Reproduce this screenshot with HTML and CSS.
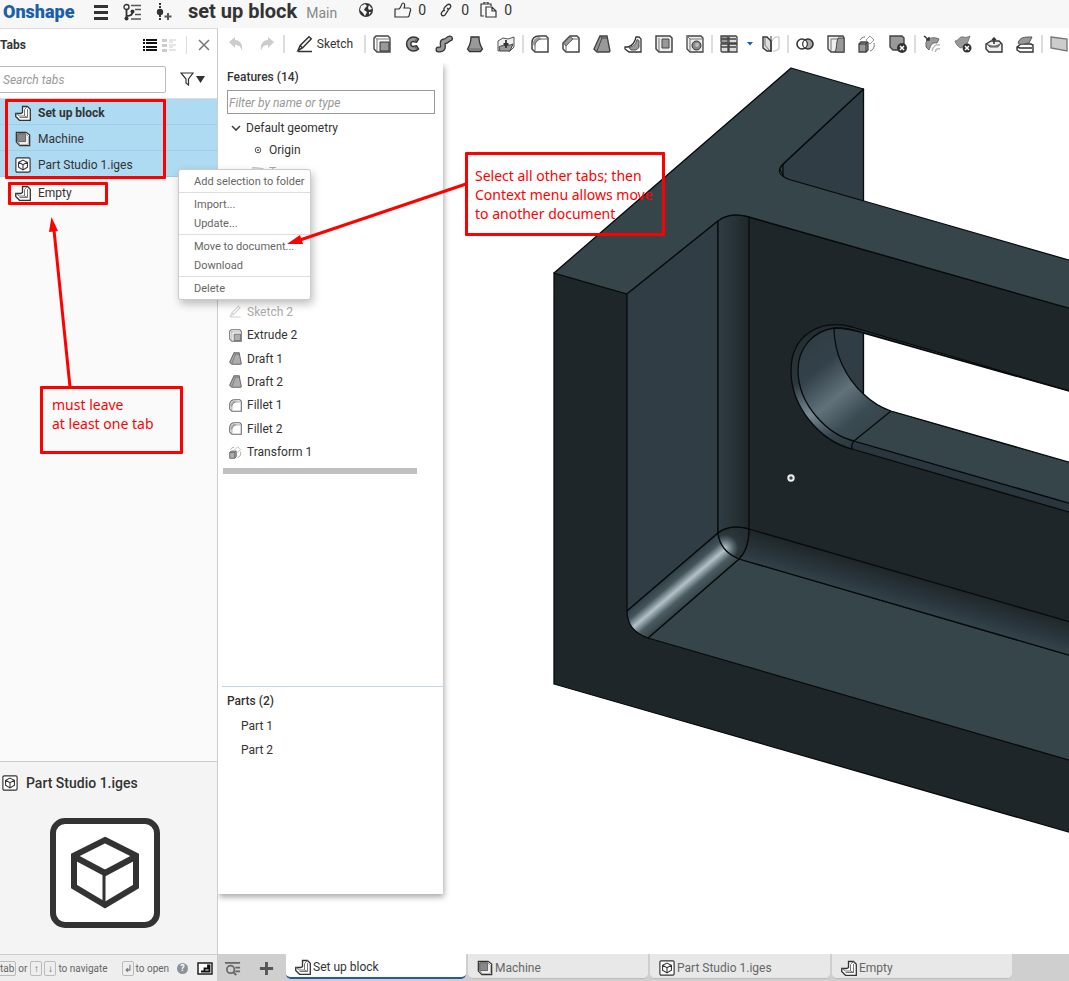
FILE: index.html
```html
<!DOCTYPE html>
<html lang="en">
<head>
    <meta charset="UTF-8">
    <title>set up block | Main</title>
    <link rel="stylesheet" href="styles.css">
</head>
<body>
    <!-- icon sprites -->
    <svg class="sprites" aria-hidden="true">
        <symbol id="i-studio" viewBox="0 0 16 16"><path d="M7.500 1.500h5l2.800 2.800v11H4.500L.7 11.500v-3h5l1.800-1z" fill="#fff" stroke="#333" stroke-width="1.300"/><path d="M.7 8.500l3.800 2.500h5V4.500l3-3M9.500 11l3 1.500h-8M12.500 4v8.500" fill="none" stroke="#777"/></symbol>
        <symbol id="i-machine" viewBox="0 0 18 18"><path d="M1.500 1.500h11l4 3v12h-11l-4-4z" fill="#fff" stroke="#333" stroke-width="1.400"/><path d="M3 3h9v9H3z" fill="#888" stroke="#555"/><path d="M12 3l3 3v9H6l-3-3" fill="none" stroke="#999"/></symbol>
        <symbol id="i-cube" viewBox="0 0 18 18"><rect x="1" y="1" width="16" height="16" rx="1.500" fill="#fff" stroke="#333" stroke-width="1.300"/><path d="M9 3.500l5 2.500v5.500l-5 3-5-3V6zM4 6l5 2.700L14 6M9 8.700v5.500" fill="none" stroke="#333" stroke-width="1.200"/></symbol>
        <symbol id="i-sketch" viewBox="0 0 18 18"><path d="M2 15.500l2.200-5L13 1.700l2.300 2L6.500 13zM4.200 10.500L6.500 13M2 16.500h14" fill="none" stroke="currentColor" stroke-width="1.500"/></symbol>
        <symbol id="i-extrude" viewBox="0 0 18 18"><path d="M1 3l2-2h12l2 2v14H4l-3-3z" fill="#fff" stroke="#444" stroke-width="1.400"/><path d="M4 4h12M4 4v12M1.500 2L4 4" stroke="#777" fill="none"/><path d="M7 7h9v9H7z" fill="#999" stroke="#333"/></symbol>
        <symbol id="i-revolve" viewBox="0 0 18 18"><path d="M14.500 4A7 7 0 1 0 14.500 14l-2-3.200-2.300.4a2.400 2.400 0 1 1 0-4.400l2.300.4z" fill="#999" stroke="#333" stroke-width="1.500"/><path d="M10 7l2.500-3M10 11l2.500 3" stroke="#555"/></symbol>
        <symbol id="i-sweep" viewBox="0 0 18 18"><path d="M3.500 14.500C12 15 5 7 9 6.500S12 4 15 3.500" fill="none" stroke="#333" stroke-width="6" stroke-linecap="round"/><path d="M3.500 14.500C12 15 5 7 9 6.500S12 4 15 3.500" fill="none" stroke="#999" stroke-width="3.500" stroke-linecap="round"/></symbol>
        <symbol id="i-loft" viewBox="0 0 18 18"><path d="M5 2h8c0 6 1.500 9 3.500 12l-2 2.500h-11l-2-2.500C3.500 11 5 8 5 2z" fill="#999" stroke="#333" stroke-width="1.300"/><path d="M3 14h12" stroke="#666"/></symbol>
        <symbol id="i-thicken" viewBox="0 0 18 18"><path d="M1 6l5-3 5 1 6-2v10l-4 4-5-1-7 1z" fill="#eee" stroke="#555"/><path d="M2 12c4-3 8 0 14-3l-3 7H3z" fill="#999" stroke="#444"/><path d="M9 5v8M6.500 9h5" stroke="#333" stroke-width="1.800" fill="none"/></symbol>
        <symbol id="i-fillet" viewBox="0 0 18 18"><path d="M1 8c0-4 2-7 7-7h7l2 2v14H4l-3-3z" fill="#fff" stroke="#444" stroke-width="1.500"/><path d="M1.500 9c1-4 3-7 7-7l2 2C6 5 5 7 4 11z" fill="#999"/><path d="M4 16v-5c0-4 3-7 7-7h5" fill="none" stroke="#666"/></symbol>
        <symbol id="i-chamfer" viewBox="0 0 18 18"><path d="M1 8l7-7h7l2 2v14H4l-3-3z" fill="#fff" stroke="#444" stroke-width="1.500"/><path d="M1.500 8L8 1.500 11 4l-7 7z" fill="#999" stroke="#555"/><path d="M4 16v-5l7-7h5" fill="none" stroke="#666"/></symbol>
        <symbol id="i-draft" viewBox="0 0 18 18"><path d="M7 1h7l3 15-1 1H4l-3-3z" fill="#999" stroke="#444" stroke-width="1.400"/><path d="M7 1l2 2h6M9 3L4 16" fill="none" stroke="#444"/></symbol>
        <symbol id="i-rib" viewBox="0 0 18 18"><path d="M12 2h3l2 2v13H5l-4-3v-2h3c4-1 7-5 8-10z" fill="#fff" stroke="#333" stroke-width="1.300"/><path d="M5 12.500c5-1 7-4 8-8l2 1v7l-3 2.500H7z" fill="#999" stroke="#555"/></symbol>
        <symbol id="i-shell" viewBox="0 0 18 18"><path d="M1 1h14l2 2v14H4l-3-3z" fill="#eee" stroke="#444" stroke-width="1.500"/><path d="M4 3v13" stroke="#777"/><path d="M7 4h7v9H7z" fill="#999" stroke="#444"/></symbol>
        <symbol id="i-hole" viewBox="0 0 18 18"><path d="M1 1h14l2 2v14H4l-3-3z" fill="#eee" stroke="#444" stroke-width="1.300"/><path d="M1 1l3 3h12M4 4v12" stroke="#777" fill="none"/><circle cx="10.500" cy="10.500" r="4.500" fill="#888" stroke="#333"/><circle cx="11" cy="10" r="2" fill="#bbb"/></symbol>
        <symbol id="i-pattern" viewBox="0 0 18 18"><g stroke="#444" stroke-width="1.300"><path d="M1 1h7v7H2L1 7z" fill="#999"/><path d="M9 1h7l1 1v6H9zM1 9h7v8H2l-1-1zM9 9h8v8H9z" fill="#ddd"/><path d="M1 4h15M1 12h15"/></g></symbol>
        <symbol id="i-mirror" viewBox="0 0 18 18"><path d="M1 2h4l4 4v10H5l-4-3z" fill="#ddd" stroke="#333" stroke-width="1.400"/><path d="M3 2v8l4 5" fill="none" stroke="#777"/><path d="M9 1v16" stroke="#333"/><path d="M10 6l3-4h4v12l-4 2h-2" fill="none" stroke="#bbb"/></symbol>
        <symbol id="i-boolean" viewBox="0 0 18 18"><circle cx="12" cy="9" r="5" fill="#aaa" stroke="#333" stroke-width="1.600"/><circle cx="6" cy="9" r="5" fill="none" stroke="#333" stroke-width="1.600"/><path d="M9 5c3 2 3 6 0 8-3-2-3-6 0-8z" fill="#fff" stroke="#333"/></symbol>
        <symbol id="i-split" viewBox="0 0 18 18"><path d="M1 1h15l1 2v14H4l-3-3z" fill="#eee" stroke="#444" stroke-width="1.400"/><path d="M11 3h6v14H8c2-3 1-9 3-14z" fill="#999" stroke="#444"/><path d="M4 4h6M4 4v12" stroke="#777"/></symbol>
        <symbol id="i-transform" viewBox="0 0 18 18"><path d="M1 9l2-2h7v8l-2 2H1z" fill="#999" stroke="#444" stroke-width="1.300"/><path d="M1 9h7v8M8 9l2-2" fill="none" stroke="#333"/><path d="M12 1l4 4-4 4-4-4z" fill="#fff" stroke="#999"/><path d="M2 5c1-2 3-3 5-3M16 8c1 4-1 7-4 8" fill="none" stroke="#777"/></symbol>
        <symbol id="i-delete" viewBox="0 0 18 18"><path d="M1 1h12l2 2v12H4l-3-3z" fill="#999" stroke="#444" stroke-width="1.400"/><circle cx="13" cy="13" r="5" fill="#333"/><path d="M11 11l4 4M15 11l-4 4" stroke="#fff" stroke-width="1.500"/></symbol>
        <symbol id="i-moveface" viewBox="0 0 18 18"><path d="M3 7c4-5 8-5 13-3l-2 4C9 7 8 10 6 15L3 12z" fill="#999" stroke="#666"/><path d="M9 16c1-5 4-7 8-6M12 17c1-3 3-4 5-3" fill="none" stroke="#bbb" stroke-width="1.500"/><path d="M1 1l5 4M6 2v3H3" fill="none" stroke="#333" stroke-width="1.500"/></symbol>
        <symbol id="i-delface" viewBox="0 0 18 18"><path d="M1 6c4 0 4-5 8-4 3 1 5 0 7-1l-3 8-6 4c-3-1-5-4-6-7z" fill="#999" stroke="#777"/><circle cx="13" cy="13" r="4.500" fill="#333"/><path d="M11 11l4 4M15 11l-4 4" stroke="#fff" stroke-width="1.500"/></symbol>
        <symbol id="i-offset" viewBox="0 0 18 18"><path d="M1 9l5-3h8l3 3v8H4l-3-3z" fill="#eee" stroke="#333" stroke-width="1.400"/><path d="M2 9c4 3 10 3 14-1l-3 4H5z" fill="#999" stroke="#555"/><path d="M9 9V3M7 5l2-2 2 2" fill="none" stroke="#333" stroke-width="1.500"/></symbol>
        <symbol id="i-replace" viewBox="0 0 18 18"><path d="M1 12l4-3h10l2 1v7H4l-3-2zM1 12l3 1h12" fill="#fff" stroke="#333" stroke-width="1.400"/><path d="M2 8c2-6 6-6 14-6l-3 6c-4 0-7 3-11 0z" fill="#999" stroke="#555"/></symbol>
        <symbol id="i-plane" viewBox="0 0 18 18"><path d="M1 2l16 2v12L1 13z" fill="#ccc" stroke="#777" stroke-width="1.300"/></symbol>
        <symbol id="i-undo" viewBox="0 0 18 18"><path d="M2 7l6-5v3c5 0 8 4 7 11-1-4-3-6-7-6v3z" fill="#ccc"/></symbol>
    </svg>

    <div class="app">
        <header class="topbar">
            <a class="logo" href="#">Onshape</a>
            <button class="top-btn" aria-label="Menu"><svg viewBox="0 0 18 18"><path d="M2 3.500h14M2 9.500h14M2 15.500h14" stroke="#333" stroke-width="3"/></svg></button>
            <button class="top-btn" aria-label="Versions"><svg viewBox="0 0 18 18"><circle cx="3.500" cy="4" r="2.500" fill="none" stroke="#333" stroke-width="1.400"/><path d="M3.500 6.500V15M3.500 13c4 0 6-1 6-4" fill="none" stroke="#333" stroke-width="1.800"/><circle cx="9.500" cy="8.500" r="2" fill="#333"/><circle cx="3.500" cy="15.500" r="2" fill="#333"/><path d="M8 2.500h10M12 6.500h6M12 11.500h6M8 16h10" stroke="#555" stroke-width="1.300"/></svg></button>
            <button class="top-btn" aria-label="Create version"><svg viewBox="0 0 18 18"><path d="M6 0v18" stroke="#333" stroke-width="2" stroke-dasharray="2 1"/><circle cx="6" cy="9" r="3.200" fill="#333"/><path d="M14 10v7M10.500 13.500h7" stroke="#555" stroke-width="2"/></svg></button>
            <h1>set up block</h1>
            <span class="branch">Main</span>
            <svg class="globe" viewBox="0 0 16 16"><circle cx="8" cy="8" r="7" fill="#333"/><path d="M3 4l4-2 2 2-2 2-1 2 3 2-2 4-2-3-3-3zM11 3l3 4-3 1-1-2zM11 10l2 0-2 3z" fill="#f7f7f7"/></svg>
            <button class="stat"><svg viewBox="0 0 18 16"><path d="M1 7h4c3-2 2-6 4-6s2 3 1 5h5c2 0 2 2 1 4l-1 4c0 1-1 1-2 1H1z" fill="none" stroke="#333" stroke-width="1.200"/></svg>0</button>
            <button class="stat"><svg viewBox="0 0 18 16"><path d="M8 9c-2-1-1-3 0-4l2-2c3-2 5 1 3 3l-2 2M10 6c2 1 1 3 0 4l-2 3c-3 2-5-1-3-3l2-2" fill="none" stroke="#333" stroke-width="1.300"/></svg>0</button>
            <button class="stat"><svg viewBox="0 0 18 16"><path d="M4 14H1V2h10v2M4 2V0h4v2" fill="none" stroke="#333" stroke-width="1.200"/><path d="M6 5h6l4 4v6H6zM12 5v4h4" fill="#fff" stroke="#333" stroke-width="1.200"/></svg>0</button>
        </header>

        <aside class="tabs-panel">
            <div class="tabs-title">
                <h2>Tabs</h2>
                <button class="view-btn" aria-label="List view"><svg viewBox="0 0 14 14"><path d="M0 2h2M3 2h11M0 5h2M3 5h11M0 9h2M3 9h11M0 12h2M3 12h11" stroke="#111" stroke-width="2"/></svg></button>
                <button class="view-btn" aria-label="Detail view"><svg viewBox="0 0 14 14"><path d="M0 2.500h5M0 7.500h5M0 12.500h5" stroke="#ccc" stroke-width="3"/><path d="M7 2h7M7 4h4M7 7h7M7 9h4M7 12h7" stroke="#ccc"/></svg></button>
                <span class="sep"></span>
                <button class="view-btn close" aria-label="Close"><svg viewBox="0 0 14 14"><path d="M2 2l10 10M12 2L2 12" stroke="#777" stroke-width="1.500"/></svg></button>
            </div>
            <div class="tabs-search">
                <input type="text" placeholder="Search tabs" aria-label="Search tabs">
                <button aria-label="Filter tabs"><svg viewBox="0 0 26 16"><path d="M1 2h12L8.500 8v6L6 12V8z" fill="none" stroke="#333" stroke-width="1.200"/><path d="M16 5h9l-4.500 7z" fill="#333"/></svg></button>
            </div>
            <ul class="tab-list">
                <li class="selected current"><svg><use href="#i-studio"/></svg>Set up block</li>
                <li class="selected"><svg><use href="#i-machine"/></svg>Machine</li>
                <li class="selected"><svg><use href="#i-cube"/></svg>Part Studio 1.iges</li>
                <li><svg><use href="#i-studio"/></svg>Empty</li>
            </ul>
            <section class="tab-preview">
                <h3><svg><use href="#i-cube"/></svg>Part Studio 1.iges</h3>
                <svg class="thumb" viewBox="0 0 110 110"><rect x="3" y="3" width="104" height="104" rx="12" fill="#fff" stroke="#333" stroke-width="6"/><path d="M55 22l31 15.500v31L55 87 24 68.500v-31z" fill="none" stroke="#333" stroke-width="6"/><path d="M24 38.500L55 55l31-16.500" fill="none" stroke="#333" stroke-width="6"/><path d="M54 55v31" stroke="#333" stroke-width="3"/></svg>
            </section>
            <footer class="hints">
                <kbd>tab</kbd><span>or</span><kbd>↑</kbd><kbd>↓</kbd><span>to navigate</span>
                <kbd class="enter">↲</kbd><span>to open</span>
                <button class="help" aria-label="Help">?</button>
                <button class="dock" aria-label="Dock"><svg viewBox="0 0 16 13"><path d="M1 1h14v11H1z" fill="#fff" stroke="#222" stroke-width="1.500"/><path d="M4 9.500h3.500v-3H11V3.500h1.500v6H7" fill="none" stroke="#111" stroke-width="1.800"/></svg></button>
            </footer>
        </aside>

        <main class="work">
            <nav class="toolbar">
                <button aria-label="Undo"><svg><use href="#i-undo"/></svg></button>
                <button class="flip" aria-label="Redo"><svg><use href="#i-undo"/></svg></button>
                <span class="sep"></span>
                <button class="sketch"><svg><use href="#i-sketch"/></svg>Sketch</button>
                <span class="sep"></span>
                <button aria-label="Extrude"><svg><use href="#i-extrude"/></svg></button>
                <button aria-label="Revolve"><svg><use href="#i-revolve"/></svg></button>
                <button aria-label="Sweep"><svg><use href="#i-sweep"/></svg></button>
                <button aria-label="Loft"><svg><use href="#i-loft"/></svg></button>
                <button aria-label="Thicken"><svg><use href="#i-thicken"/></svg></button>
                <span class="sep"></span>
                <button aria-label="Fillet"><svg><use href="#i-fillet"/></svg></button>
                <button aria-label="Chamfer"><svg><use href="#i-chamfer"/></svg></button>
                <button aria-label="Draft"><svg><use href="#i-draft"/></svg></button>
                <button aria-label="Rib"><svg><use href="#i-rib"/></svg></button>
                <button aria-label="Shell"><svg><use href="#i-shell"/></svg></button>
                <button aria-label="Hole"><svg><use href="#i-hole"/></svg></button>
                <span class="sep"></span>
                <button aria-label="Pattern"><svg><use href="#i-pattern"/></svg></button>
                <button class="caret" aria-label="More patterns"><svg viewBox="0 0 6 4"><path d="M0 0h6L3 3.500z" fill="#1b5faa"/></svg></button>
                <button aria-label="Mirror"><svg><use href="#i-mirror"/></svg></button>
                <span class="sep"></span>
                <button aria-label="Boolean"><svg><use href="#i-boolean"/></svg></button>
                <button aria-label="Split"><svg><use href="#i-split"/></svg></button>
                <button aria-label="Transform"><svg><use href="#i-transform"/></svg></button>
                <button aria-label="Delete part"><svg><use href="#i-delete"/></svg></button>
                <span class="sep"></span>
                <button aria-label="Move face"><svg><use href="#i-moveface"/></svg></button>
                <button aria-label="Delete face"><svg><use href="#i-delface"/></svg></button>
                <button aria-label="Offset face"><svg><use href="#i-offset"/></svg></button>
                <button aria-label="Replace face"><svg><use href="#i-replace"/></svg></button>
                <span class="sep"></span>
                <button aria-label="Plane"><svg><use href="#i-plane"/></svg></button>
            </nav>

            <div class="stage">
                <section class="feature-panel">
                    <div class="features">
                        <h2>Features (14)</h2>
                        <input type="text" placeholder="Filter by name or type" aria-label="Filter by name or type">
                        <ul class="geometry">
                            <li class="root"><svg viewBox="0 0 12 12"><path d="M2 4l4 4 4-4" fill="none" stroke="#444" stroke-width="1.600"/></svg>Default geometry</li>
                            <li><svg viewBox="0 0 12 12"><circle cx="6" cy="6" r="2.800" fill="none" stroke="#555"/><circle cx="6" cy="6" r="1" fill="#555"/></svg>Origin</li>
                            <li class="off"><svg><use href="#i-plane"/></svg>T</li>
                        </ul>
                        <ul class="history">
                            <li class="off"><svg><use href="#i-sketch"/></svg>Sketch 2</li>
                            <li><svg><use href="#i-extrude"/></svg>Extrude 2</li>
                            <li><svg><use href="#i-draft"/></svg>Draft 1</li>
                            <li><svg><use href="#i-draft"/></svg>Draft 2</li>
                            <li><svg><use href="#i-fillet"/></svg>Fillet 1</li>
                            <li><svg><use href="#i-fillet"/></svg>Fillet 2</li>
                            <li><svg><use href="#i-transform"/></svg>Transform 1</li>
                        </ul>
                        <div class="rollback"></div>
                    </div>
                    <div class="parts">
                        <h2>Parts (2)</h2>
                        <ul>
                            <li>Part 1</li>
                            <li>Part 2</li>
                        </ul>
                    </div>
                </section>

                <svg class="model" viewBox="443 63 626 891" preserveAspectRatio="xMinYMin slice">
                    <defs>
                        <linearGradient id="gv" x1="718" x2="749" y1="0" y2="0" gradientUnits="userSpaceOnUse"><stop offset="0" stop-color="#2f3c43"/><stop offset=".5" stop-color="#283338"/><stop offset="1" stop-color="#1f2629"/></linearGradient>
                        <linearGradient id="gb" x1="900" y1="572" x2="891" y2="604" gradientUnits="userSpaceOnUse"><stop offset="0" stop-color="#1f2629"/><stop offset=".6" stop-color="#2a363d"/><stop offset="1" stop-color="#34434a"/></linearGradient>
                        <linearGradient id="gl" x1="672" y1="572" x2="694" y2="598" gradientUnits="userSpaceOnUse"><stop offset="0" stop-color="#303d44"/><stop offset=".25" stop-color="#44545b"/><stop offset=".5" stop-color="#b3c2c9"/><stop offset=".75" stop-color="#4a5b61"/><stop offset="1" stop-color="#36454a"/></linearGradient>
                        <linearGradient id="gs" x1="805" y1="345" x2="875" y2="430" gradientUnits="userSpaceOnUse"><stop offset="0" stop-color="#303d44"/><stop offset=".25" stop-color="#33424a"/><stop offset=".55" stop-color="#62727a"/><stop offset=".8" stop-color="#3b4b53"/><stop offset="1" stop-color="#36454a"/></linearGradient>
                        <linearGradient id="gr" x1="800" y1="325" x2="850" y2="449" gradientUnits="userSpaceOnUse"><stop offset="0" stop-color="#222a2e"/><stop offset=".4" stop-color="#2b373d"/><stop offset=".65" stop-color="#7a8b95"/><stop offset=".85" stop-color="#35444c"/><stop offset="1" stop-color="#2a363d"/></linearGradient>
                        <radialGradient id="gc" cx="725" cy="548" r="22" gradientUnits="userSpaceOnUse"><stop offset="0" stop-color="#b3c2c9"/><stop offset=".35" stop-color="#5a6a70"/><stop offset=".6" stop-color="#2b373c"/><stop offset="1" stop-color="#263034"/></radialGradient>
                    </defs>
                    <g stroke="#070b0c" stroke-width="1.300" stroke-linejoin="round">
                        <path d="M863.500 89L779 168l8 16 76.500 22z" fill="#303d44"/>
                        <path d="M554 273L627 294l122-77 330 94v524L554 684z" fill="#1f2629"/>
                        <path d="M554 273L791 68l72.500 21L783 164c-6 6-5 12 8 16l288 83v48L749 217q-19-5-31 4l-91 73z" fill="#36454a"/>
                        <path d="M783 164v12" fill="none"/>
                        <path d="M627 294l91-73v312l-91 78z" fill="#303d44"/>
                        <path d="M718 221q12-9 31-4v312q-19-5-31 4z" fill="url(#gv)"/>
                        <path d="M739 559l340 99v105L648 638z" fill="#36454a"/>
                        <path d="M749 529l330 95.500V658L739 559q10-10 10-30z" fill="url(#gb)"/>
                        <path d="M627 611l91-78q2 18 21 26l-91 79q-21-7-21-27z" fill="url(#gl)"/>
                        <path d="M718 533q12-9 31-4 0 20-10 30-19-8-21-26z" fill="url(#gc)"/>
                        <!-- slot -->
                        <path d="M1079 394L852 327c-30-8-61 6-61 44 0 36 29 70 61 78l227 66z" fill="url(#gr)"/>
                        <path d="M834 328c-21 3-36 20-36 42 0 36 31 65 56 71l225 65V394L863.500 333q-18-6-29.500-5z" fill="url(#gs)"/>
                        <path d="M891 411l188 54v41L854 441z" fill="#36454a"/>
                        <path d="M834 328q13 0 29.500 5v61C846 378 834 354 834 328z" fill="#303d44"/>
                        <path d="M863.500 333L1079 394v71L891 411q-15-5-27.500-17z" fill="#fff"/>
                        <path d="M854 441q-3 4-2 8" fill="none"/>
                    </g>
                    <circle cx="791" cy="478" r="2.700" fill="#444" stroke="#eee" stroke-width="2"/>
                </svg>
            </div>

            <nav class="doc-tabs">
                <button class="tool" aria-label="Search tabs"><svg viewBox="0 0 18 18"><path d="M1 3h16M12 8h5M12 12h5" stroke="#666" stroke-width="1.800"/><circle cx="7" cy="10" r="4" fill="none" stroke="#666" stroke-width="1.800"/><path d="M10 13l3 3" stroke="#666" stroke-width="2"/></svg></button>
                <button class="tool" aria-label="Add tab"><svg viewBox="0 0 18 18"><path d="M9 2v14M2 9h14" stroke="#555" stroke-width="3"/></svg></button>
                <button class="doc-tab active"><svg><use href="#i-studio"/></svg>Set up block</button>
                <button class="doc-tab"><svg><use href="#i-machine"/></svg>Machine</button>
                <button class="doc-tab"><svg><use href="#i-cube"/></svg>Part Studio 1.iges</button>
                <button class="doc-tab"><svg><use href="#i-studio"/></svg>Empty</button>
            </nav>
        </main>

        <div class="context-menu">
            <div><button>Add selection to folder</button></div>
            <div><button>Import...</button><button>Update...</button></div>
            <div><button>Move to document...</button><button>Download</button></div>
            <div><button>Delete</button></div>
        </div>

        <!-- callouts drawn over the document -->
        <div class="mark mark-selected"></div>
        <div class="mark mark-empty"></div>
        <p class="mark note-leave">must leave<br>at least one tab</p>
        <p class="mark note-select">Select all other tabs; then<br>Context menu allows move<br>to another document</p>
        <svg class="arrows" width="480" height="400" viewBox="0 0 480 400"><path d="M70 387L54 230M466 184L300 240" stroke="#f00" stroke-width="3"/><path d="M51.500 217l6.500 14-9 1zM287 244l13-9 3 9z" fill="#f00"/></svg>
    </div>
</body>
</html>
```
FILE: styles.css
```css
* {
    box-sizing: border-box;
}
body {
    margin: 0;
    font-family: Roboto, sans-serif;
    font-size: 12px;
    color: #333;
    background: #fff;
}
h1, h2, h3, p, ul {
    margin: 0;
    padding: 0;
}
ul {
    list-style: none;
}
button {
    display: flex;
    align-items: center;
    padding: 0;
    border: 0;
    background: none;
    color: inherit;
    font: inherit;
}
svg {
    display: block;
    flex: none;
}
input {
    font: italic 12px Roboto, sans-serif;
    color: #333;
    background: #fff;
}
input::placeholder {
    color: #999;
}
.sprites {
    position: absolute;
    width: 0;
    height: 0;
}
.app {
    position: relative;
    display: grid;
    grid-template: 28px 1fr / 218px 1fr;
    height: 100vh;
    overflow: hidden;
}

/* top bar */
.topbar {
    grid-column: 1 / 3;
    display: flex;
    align-items: center;
    height: 28px;
    padding: 0 0 5px 3px;
    background: #f7f7f7;
}
.logo {
    width: 88px;
    color: #1b5faa;
    font-size: 18px;
    font-weight: 900;
    text-decoration: none;
}
.top-btn {
    width: 31px;
}
.top-btn svg {
    width: 20px;
    height: 18px;
}
h1 {
    margin: 0 9px 0 4px;
    font-size: 20px;
    line-height: 23px;
}
.branch {
    width: 52px;
    padding-top: 2px;
    color: #888;
    font-size: 14px;
}
.globe {
    width: 16px;
    height: 16px;
    margin-bottom: 3px;
}
.stat {
    gap: 6px;
    width: 43px;
    margin-bottom: 3px;
    font-size: 14px;
}
.globe + .stat {
    margin-left: 20px;
}
.stat svg {
    width: 18px;
    height: 16px;
}

/* tabs panel */
.tabs-panel {
    display: flex;
    flex-direction: column;
    min-height: 0;
    background: #fafafa;
    border-top: 1px solid #ddd;
    border-right: 1px solid #ccc;
}
.tabs-title {
    display: flex;
    align-items: center;
    height: 32px;
    padding-right: 5px;
    background: #fff;
}
.tabs-title h2 {
    flex: 1;
    font-size: 12px;
}
.view-btn {
    margin-right: 5px;
}
.view-btn svg {
    width: 14px;
    height: 14px;
}
.sep {
    width: 2px;
    height: 18px;
    background: #ddd;
}
.tabs-title .sep {
    width: 1px;
    margin: 0 10px 0 5px;
}
.close {
    margin-right: 1px;
}
.tabs-search {
    display: flex;
    gap: 14px;
    height: 38px;
    padding-top: 5px;
    background: #fff;
    border-bottom: 1px solid #ddd;
}
.tabs-search input {
    width: 168px;
    height: 27px;
    margin-left: -2px;
    padding: 1px 4px;
    border: 1px solid #bbb;
    border-radius: 2px;
}
.tabs-search button {
    height: 25px;
}
.tabs-search svg {
    width: 26px;
    height: 16px;
}
.tab-list {
    flex: 1;
}
.tab-list li {
    display: flex;
    align-items: center;
    gap: 7px;
    height: 26px;
    padding: 3px 0 0 15px;
}
.tab-list li.selected {
    background: #aedaf2;
    border-bottom: 1px solid #9ccfea;
}
.tab-list li.selected + li:not(.selected) {
    height: 28px;
}
.tab-list .current {
    font-weight: 700;
}
.tab-list svg,
.tab-preview h3 svg {
    width: 16px;
    height: 16px;
}
.tab-preview {
    height: 193px;
    padding: 13px 2px;
    background: #f4f4f4;
    border-top: 1px solid #ccc;
}
.tab-preview h3 {
    display: flex;
    align-items: center;
    gap: 8px;
    height: 16px;
    font-size: 14px;
    font-weight: 500;
}
.thumb {
    width: 110px;
    height: 110px;
    margin: 27px 0 0 48px;
}
.hints {
    display: flex;
    align-items: center;
    gap: 3px;
    height: 27px;
    background: #eee;
    border-top: 1px solid #ccc;
    color: #666;
    font-size: 10px;
    white-space: nowrap;
}
kbd {
    min-width: 12px;
    height: 15px;
    margin-right: -1px;
    padding: 0 1px;
    border: 1px solid #bbb;
    border-radius: 2px;
    font: 10px/13px Roboto, sans-serif;
    text-align: center;
}
kbd:first-child {
    margin-left: -2px;
}
.enter {
    margin-left: 11px;
}
.help {
    justify-content: center;
    width: 11px;
    height: 11px;
    margin: 0 6px 0 5px;
    border-radius: 50%;
    background: #8c9299;
    color: #fff;
    font-size: 9px;
    font-weight: 700;
}
.dock svg {
    width: 16px;
    height: 13px;
}

/* work area */
.work {
    display: flex;
    flex-direction: column;
    min-width: 0;
    min-height: 0;
}
.toolbar {
    display: flex;
    align-items: center;
    gap: 1px;
    height: 35px;
    padding: 0 0 3px 3px;
    overflow: hidden;
}
.toolbar button {
    flex: none;
    justify-content: center;
    width: 30px;
    height: 30px;
}
.toolbar svg {
    width: 18px;
    height: 18px;
}
.toolbar .flip svg {
    transform: scaleX(-1);
}
.toolbar .sep {
    flex: none;
}
.toolbar .sketch {
    gap: 3px;
    width: 77px;
    font-size: 12px;
}
.toolbar .caret {
    width: 10px;
}
.toolbar .caret svg {
    width: 6px;
    height: 4px;
}
.stage {
    display: flex;
    flex: 1;
    min-height: 0;
}
.feature-panel {
    position: relative;
    display: flex;
    flex-direction: column;
    flex: none;
    width: 225px;
    margin-bottom: 60px;
    box-shadow: 1px 3px 6px rgba(0, 0, 0, .35);
    clip-path: inset(0 -12px -12px 0);
}
.feature-panel h2 {
    font-size: 12px;
    font-weight: 500;
    line-height: 16px;
}
.features {
    flex: 1;
    padding: 6px 8px 0 9px;
}
.features input {
    width: 100%;
    height: 24px;
    margin: 5px 0 3px;
    padding: 2px 1px 0;
    border: 1px solid #999;
}
.feature-panel li {
    display: flex;
    align-items: center;
}
.geometry li {
    gap: 5px;
    height: 22px;
    padding-left: 25px;
}
.geometry .root {
    gap: 4px;
    padding-left: 3px;
}
.geometry svg {
    width: 12px;
    height: 12px;
}
.history {
    display: grid;
    grid-auto-rows: 1fr;
    height: 164px;
    margin-top: 117px;
}
.history li {
    gap: 5px;
    padding-left: 2px;
}
.history svg {
    width: 13px;
    height: 13px;
    opacity: .8;
}
.off {
    color: #aaa;
}
.off svg {
    opacity: .5;
}
.rollback {
    width: 194px;
    height: 6px;
    margin: 4px 0 0 -4px;
    background: #c0c0c0;
}
.parts {
    height: 208px;
    margin-left: 4px;
    padding: 6px 5px;
    border-top: 1px solid #c8d5e0;
}
.parts ul {
    margin-top: 5px;
}
.parts li {
    height: 24px;
    padding-left: 14px;
}
.model {
    flex: 1;
    min-width: 0;
    height: 100%;
}

/* bottom document tabs */
.doc-tabs {
    display: flex;
    gap: 2px;
    height: 27px;
    padding: 0 0 2px;
    background: #cfcfcf;
}
.tool {
    justify-content: center;
    width: 32px;
    padding: 3px 4px 0 0;
}
.tool svg {
    width: 17px;
    height: 17px;
}
.doc-tab {
    gap: 2px;
    width: 180px;
    padding: 3px 0 0 9px;
    background: #e8e8e8;
    border-bottom: 1px solid #bbb;
    border-radius: 0 0 5px 5px;
    color: #666;
    font-size: 12px;
}
.doc-tab.active {
    background: #fff;
    border-bottom: 2px solid #1b5faa;
    color: #333;
}
.doc-tab svg {
    width: 16px;
    height: 16px;
}

/* context menu */
.context-menu {
    position: absolute;
    top: 169px;
    left: 178px;
    width: 133px;
    background: #fff;
    border: 1px solid #ccc;
    border-radius: 3px;
    box-shadow: 2px 4px 8px rgba(0, 0, 0, .25);
    color: #666;
    font-size: 11px;
}
.context-menu div {
    padding: 2px 0 1px;
    border-bottom: 1px solid #ddd;
}
.context-menu div:last-child {
    border-bottom: 0;
}
.context-menu button {
    width: 100%;
    height: 19px;
    padding-left: 15px;
    white-space: nowrap;
}

/* callouts */
.mark {
    position: absolute;
    border: 3px solid #f00;
    border-radius: 1px;
    color: #f00;
    font: 14px/19px "Noto Sans", sans-serif;
    white-space: nowrap;
}
.mark-selected {
    top: 99px;
    left: 5px;
    width: 161px;
    height: 80px;
}
.mark-empty {
    top: 182px;
    left: 8px;
    width: 100px;
    height: 23px;
}
.note-leave {
    top: 386px;
    left: 40px;
    width: 143px;
    height: 68px;
    padding: 6px 9px;
}
.note-select {
    top: 152px;
    left: 465px;
    width: 200px;
    height: 84px;
    padding: 11px 7px;
}
.arrows {
    position: absolute;
    top: 0;
    left: 0;
    pointer-events: none;
}
```
